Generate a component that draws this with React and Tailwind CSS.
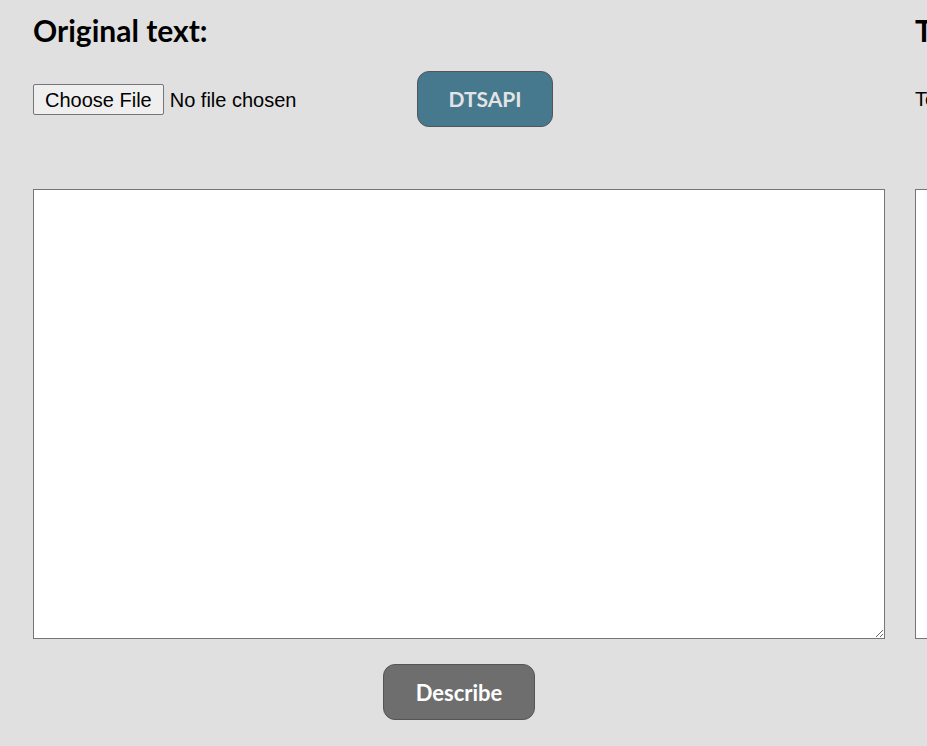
import React, { useState } from 'react';

function App() {
  const [original, setOriginal] = useState('');
  const [translated, setTranslated] = useState('');

  return (
    <div className="w-screen min-h-screen overflow-hidden bg-[#e0e0e0]">
      <div className="flex gap-[30px] pl-[33px] pt-[12px]">
        {/* left column */}
        <div className="w-[852px] shrink-0 flex flex-col">
          <h2 className="font-['Lato',sans-serif] font-bold text-[30px] leading-[36px] text-black">
            Original text:
          </h2>
          <div className="mt-[23px] h-[56px] flex items-center">
            <input
              type="file"
              className="w-[364px] font-['Liberation_Sans',Arial,sans-serif] text-[20px] text-black file:mr-[6px] file:h-[31px] file:px-[11px] file:border file:border-[#767676] file:bg-[#efefef] file:rounded-[2px] file:text-black"
            />
            <button
              type="button"
              className="ml-5 w-[136px] h-[56px] rounded-[12px] border border-[#555] bg-[#46788e] font-['Lato',sans-serif] font-bold text-[21px] text-[#e4e4e4]"
            >
              DTSAPI
            </button>
          </div>
          <textarea
            className="mt-[62px] block w-[852px] h-[450px] bg-white border border-[#767676] resize"
            value={original}
            onChange={(e) => setOriginal(e.target.value)}
          />
          <div className="mt-[25px] flex justify-center">
            <button
              type="button"
              className="w-[152px] h-[56px] rounded-[12px] border border-[#555] bg-[#6e6e6e] font-['Lato',sans-serif] font-bold text-[22px] text-white"
            >
              Describe
            </button>
          </div>
        </div>

        {/* right column */}
        <div className="w-[852px] shrink-0 flex flex-col">
          <h2 className="font-['Lato',sans-serif] font-bold text-[30px] leading-[36px] text-black">
            Translated text:
          </h2>
          <div className="mt-[23px] h-[56px] flex items-center font-['Liberation_Sans',Arial,sans-serif] text-[20px] text-black">
            Text language: English
          </div>
          <textarea
            className="mt-[62px] block w-[852px] h-[450px] bg-white border border-[#767676] resize"
            value={translated}
            onChange={(e) => setTranslated(e.target.value)}
          />
        </div>
      </div>
    </div>
  );
}

export default App;
